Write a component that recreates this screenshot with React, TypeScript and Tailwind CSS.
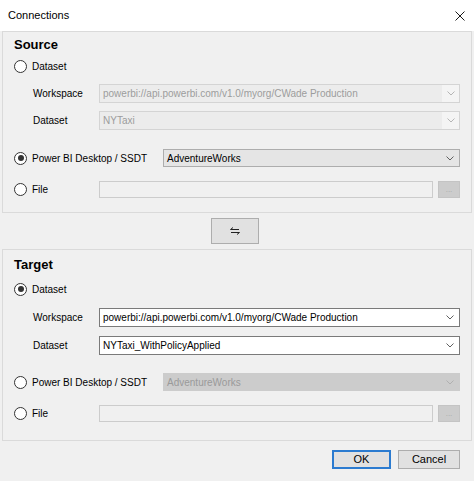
import React from "react";

const font = { fontFamily: '"Liberation Sans", Arial, sans-serif' };

function Radio({ checked }: { checked?: boolean }) {
  return (
    <span className="w-[13px] h-[13px] shrink-0 rounded-full border border-[#333333] bg-white flex items-center justify-center">
      {checked && <span className="w-[6px] h-[6px] rounded-full bg-[#333333]" />}
    </span>
  );
}

function Chevron({ color = "#606060" }: { color?: string }) {
  return (
    <svg width="8" height="5" viewBox="0 0 8 5" className="shrink-0">
      <path d="M0.5 0.5 L4 4 L7.5 0.5" fill="none" stroke={color} strokeWidth="1" />
    </svg>
  );
}

type ComboKind = "white" | "readonly" | "selected" | "disabledList";

function Combo({ value, kind, h = "h-[19px]" }: { value: string; kind: ComboKind; h?: string }) {
  if (kind === "readonly") {
    return (
      <div className={`flex-1 ${h} flex border border-[#d4d4d4] bg-[#ececec]`}>
        <div className="flex-1 pl-[3px] flex items-center text-[10px] text-[#9c9c9c]">{value}</div>
        <div className="w-[17px] bg-[#f4f4f4] flex items-center justify-center">
          <Chevron color="#b5b5b5" />
        </div>
      </div>
    );
  }
  const styles: Record<string, string> = {
    white: "border-[#7a7a7a] bg-white text-black",
    selected: "border-[#adadad] bg-[#e5e5e5] text-black",
    disabledList: "border-[#cccccc] bg-[#cccccc] text-[#9a9a9a]",
  };
  return (
    <div className={`flex-1 ${h} flex items-center border pl-[3px] pr-[5px] text-[10px] ${styles[kind]}`}>
      <span className="flex-1">{value}</span>
      <Chevron color={kind === "disabledList" ? "#b0b0b0" : "#606060"} />
    </div>
  );
}

function FieldRow({ label, children, className = "" }: { label: string; children: React.ReactNode; className?: string }) {
  return (
    <div className={`flex items-center ${className}`}>
      <div className="w-[85px] shrink-0 pl-[19px] text-[10px] text-black">{label}</div>
      {children}
    </div>
  );
}

function RadioRow({ label, checked, width, children, className = "" }: { label: string; checked?: boolean; width: string; children?: React.ReactNode; className?: string }) {
  return (
    <div className={`flex items-center ${className}`}>
      <div className={`${width} shrink-0 flex items-center gap-[5px] text-[10px] text-black`}>
        <Radio checked={checked} />
        <span>{label}</span>
      </div>
      {children}
    </div>
  );
}

function FileRow({ className = "" }: { className?: string }) {
  return (
    <RadioRow label="File" width="w-[85px]" className={className}>
      <div className="flex-1 h-[17px] border border-[#cccccc] bg-[#f0f0f0]" />
      <div className="ml-[5px] w-[22px] h-[17px] border border-[#c4c4c4] bg-[#cccccc] flex items-center justify-center text-[8px] leading-none text-[#a8a8a8]">
        ...
      </div>
    </RadioRow>
  );
}

export default function App() {
  return (
    <div className="w-[474px] h-[481px] bg-[#f0f0f0] flex flex-col overflow-hidden" style={font}>
      <div className="h-[31px] shrink-0 bg-white flex items-center justify-between pl-[8px] pr-[9px]">
        <span className="text-[11px] text-black">Connections</span>
        <svg width="10" height="10" viewBox="0 0 10 10">
          <path d="M0.5 0.5 L9.5 9.5 M9.5 0.5 L0.5 9.5" stroke="#1a1a1a" strokeWidth="1" />
        </svg>
      </div>

      <div className="mx-[2px] h-[182px] border border-[#dadada] pl-[11px] pr-[11px] flex flex-col">
        <div className="mt-[5px] text-[13px] leading-[16px] font-bold text-black">Source</div>
        <RadioRow label="Dataset" width="w-[85px]" className="mt-[6px] h-[14px]" />
        <FieldRow label="Workspace" className="mt-[11px]">
          <Combo kind="readonly" value="powerbi://api.powerbi.com/v1.0/myorg/CWade Production" />
        </FieldRow>
        <FieldRow label="Dataset" className="mt-[8px]">
          <Combo kind="readonly" value="NYTaxi" />
        </FieldRow>
        <RadioRow label="Power BI Desktop / SSDT" checked width="w-[149px]" className="mt-[19px]">
          <Combo kind="selected" value="AdventureWorks" h="h-[18px]" />
        </RadioRow>
        <FileRow className="mt-[14px]" />
      </div>

      <div className="flex justify-center pt-[5px] pb-[5px] pr-[4px]">
        <div className="w-[48px] h-[26px] border border-[#adadad] bg-[#e1e1e1] flex items-center justify-center">
          <svg width="10" height="8" viewBox="0 0 10 8">
            <path d="M0.5 2.5 H9 M0.5 2.5 L3 0.5" fill="none" stroke="#222" strokeWidth="1" />
            <path d="M9.5 5.5 H1 M9.5 5.5 L7 7.5" fill="none" stroke="#222" strokeWidth="1" />
          </svg>
        </div>
      </div>

      <div className="mx-[2px] h-[192px] border border-[#dadada] pl-[11px] pr-[11px] flex flex-col">
        <div className="mt-[7px] text-[13px] leading-[16px] font-bold text-black">Target</div>
        <RadioRow label="Dataset" checked width="w-[85px]" className="mt-[9px] h-[14px]" />
        <FieldRow label="Workspace" className="mt-[12px]">
          <Combo kind="white" value="powerbi://api.powerbi.com/v1.0/myorg/CWade Production" />
        </FieldRow>
        <FieldRow label="Dataset" className="mt-[9px]">
          <Combo kind="white" value="NYTaxi_WithPolicyApplied" />
        </FieldRow>
        <RadioRow label="Power BI Desktop / SSDT" width="w-[149px]" className="mt-[18px]">
          <Combo kind="disabledList" value="AdventureWorks" h="h-[18px]" />
        </RadioRow>
        <FileRow className="mt-[14px]" />
      </div>

      <div className="flex justify-end gap-[7px] pr-[14px] pt-[9px]">
        <div className="w-[59px] h-[19px] border-2 border-[#2b7bd0] bg-[#e1e1e1] flex items-center justify-center text-[11px] text-black">
          OK
        </div>
        <div className="w-[62px] h-[19px] border border-[#adadad] bg-[#e1e1e1] flex items-center justify-center text-[11px] text-black">
          Cancel
        </div>
      </div>
    </div>
  );
}
